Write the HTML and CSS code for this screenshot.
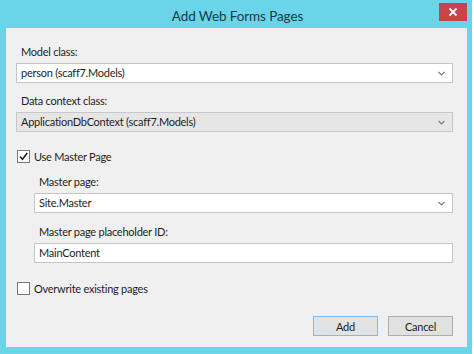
FILE: index.html
```html
<!DOCTYPE html>
<html>
<head>
<meta charset="utf-8">
<link rel="stylesheet" href="styles.css">
</head>
<body>
<div class="window">
  <div class="titlebar">
    <div class="title">Add Web Forms Pages</div>
    <div class="close"><svg width="10" height="10" viewBox="0 0 10 10"><path d="M1.5 1.5L8.5 8.5M8.5 1.5L1.5 8.5" stroke="#fff" stroke-width="1.8"/></svg></div>
  </div>
  <div class="client">
    <div class="label l1">Model class:</div>
    <div class="combo"><span>person (scaff7.Models)</span><svg class="chev" width="7" height="5" viewBox="0 0 7 5"><path d="M0.5 1L3.5 4L6.5 1" fill="none" stroke="#808080" stroke-width="1.2"/></svg></div>
    <div class="label l2">Data context class:</div>
    <div class="combo disabled"><span>ApplicationDbContext (scaff7.Models)</span><svg class="chev" width="7" height="5" viewBox="0 0 7 5"><path d="M0.5 1L3.5 4L6.5 1" fill="none" stroke="#808080" stroke-width="1.2"/></svg></div>
    <div class="check c1"><span class="box"><svg width="11" height="11" viewBox="0 0 11 11"><path d="M2 5.5L4.5 8.2L9.2 2" fill="none" stroke="#222" stroke-width="1.6"/></svg></span><span>Use Master Page</span></div>
    <div class="indent">
      <div class="label l3">Master page:</div>
      <div class="combo"><span>Site.Master</span><svg class="chev" width="7" height="5" viewBox="0 0 7 5"><path d="M0.5 1L3.5 4L6.5 1" fill="none" stroke="#808080" stroke-width="1.2"/></svg></div>
      <div class="label l4">Master page placeholder ID:</div>
      <div class="input"><span>MainContent</span></div>
    </div>
    <div class="check c2"><span class="box"></span><span>Overwrite existing pages</span></div>
    <div class="buttons">
      <div class="btn default">Add</div>
      <div class="btn">Cancel</div>
    </div>
  </div>
</div>
</body>
</html>
```
FILE: styles.css
```css
html, body {
  margin: 0;
  padding: 0;
}
body {
  width: 474px;
  height: 354px;
  background: #ffffff;
  font-family: Lato, "Noto Sans", sans-serif;
  font-size: 11px;
  letter-spacing: -0.25px;
  color: #1e1e1e;
  overflow: hidden;
}
.window {
  width: 472px;
  height: 354px;
  background: #6ad5e9;
  box-sizing: border-box;
  padding: 0 5px 7px 6px;
  display: flex;
  flex-direction: column;
}
.titlebar {
  height: 28px;
  position: relative;
  display: flex;
  align-items: center;
  justify-content: center;
}
.title {
  font-size: 13.5px;
  letter-spacing: -0.1px;
  color: #1a3a44;
  margin-top: 3px;
  margin-left: 2px;
}
.close {
  position: absolute;
  right: 0;
  top: 3px;
  width: 28px;
  height: 18px;
  background: #c9434b;
  display: flex;
  align-items: center;
  justify-content: center;
}
.client {
  flex: 1;
  background: #f0f0f0;
  padding: 16px 14px 0 10px;
  display: flex;
  flex-direction: column;
}
.label {
  height: 16px;
  line-height: 16px;
  padding-left: 5px;
  margin-bottom: 3px;
}
.combo, .input {
  height: 20px;
  box-sizing: border-box;
  border: 1px solid #c5c5c5;
  background: #ffffff;
  display: flex;
  align-items: center;
  padding: 0 0 1px 4px;
  justify-content: space-between;
}
.combo.disabled {
  background: #e6e6e6;
  border-color: #c8c8c8;
}
.chev {
  margin-right: 7px;
  margin-top: 1px;
}
.l2 {
  margin-top: 10px;
}
.check {
  display: flex;
  align-items: center;
  height: 16px;
  padding-left: 1px;
}
.box {
  width: 13px;
  height: 13px;
  box-sizing: border-box;
  border: 1px solid #7a7a7a;
  background: #ffffff;
  margin-right: 4px;
  display: flex;
  align-items: center;
  justify-content: center;
}
.c1 {
  margin-top: 16px;
}
.indent {
  margin-left: 18px;
  display: flex;
  flex-direction: column;
}
.l3 {
  margin-top: 10px;
}
.l4 {
  margin-top: 11px;
}
.c2 {
  margin-top: 17px;
}
.buttons {
  display: flex;
  justify-content: flex-end;
  gap: 10px;
  margin-top: 20px;
}
.btn {
  width: 65px;
  height: 20px;
  box-sizing: border-box;
  border: 1px solid #adadad;
  background: #e1e1e1;
  display: flex;
  align-items: center;
  justify-content: center;
}
.btn.default {
  border-color: #86b8e8;
  background: #e3e3e3;
}
```
